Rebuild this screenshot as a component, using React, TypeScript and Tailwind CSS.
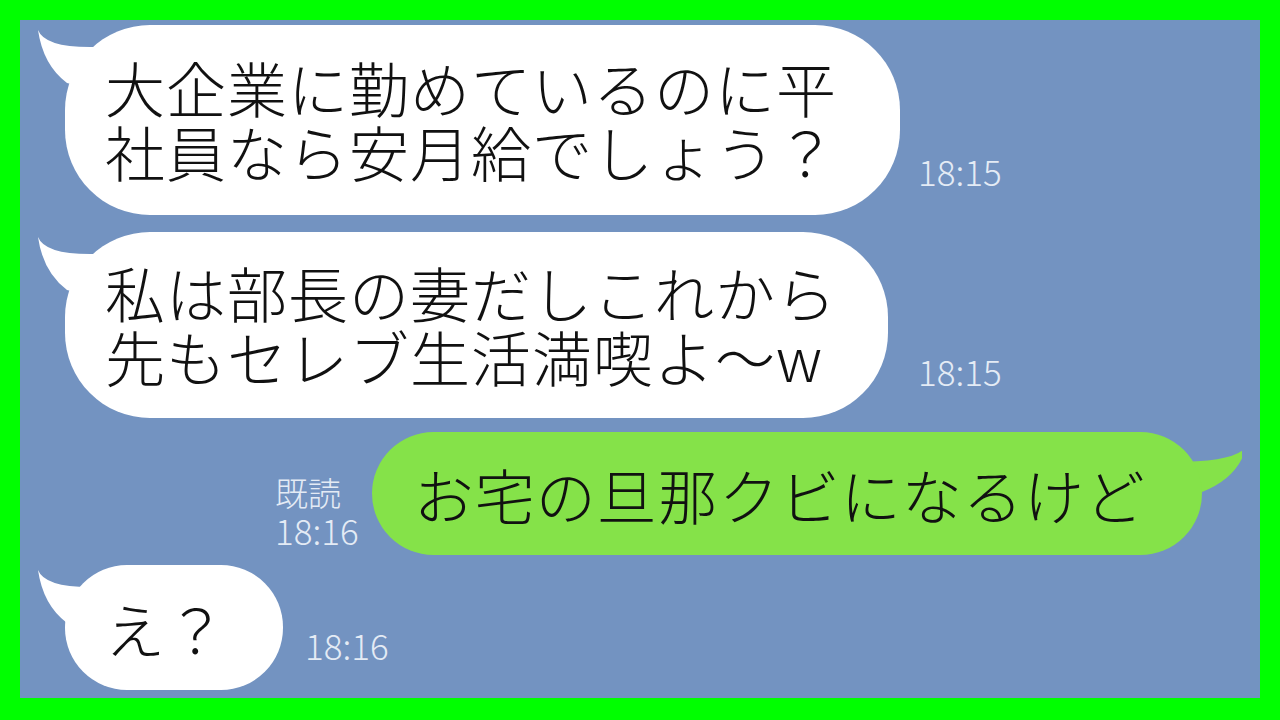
import React from "react";

const JP = { fontFamily: '"Noto Sans CJK JP", "Noto Sans", sans-serif' };

function LeftTail() {
  return (
    <svg
      className="absolute left-[-30px] top-0"
      width="70"
      height="70"
      viewBox="0 0 70 70"
    >
      <path d="M3 5 Q10 23 60 22 L60 65 L32 58 Q8 40 3 5 Z" fill="#ffffff" />
    </svg>
  );
}

function RightTail() {
  return (
    <svg
      className="absolute right-[-40px] top-0"
      width="70"
      height="70"
      viewBox="0 0 70 70"
    >
      <path d="M75 12 Q70 30 0 30 L0 65 L30 60 Q68 45 75 12 Z" fill="#85e249" />
    </svg>
  );
}

function Time({ children, cls }: { children: React.ReactNode; cls: string }) {
  return (
    <div className={`text-[35px] font-light leading-none text-[#e4ebf5] ${cls}`} style={JP}>
      {children}
    </div>
  );
}

export default function App() {
  return (
    <div className="w-[1280px] h-[720px] bg-[#00ff00] pt-[20px] pl-[20px] pr-[20px] pb-[22px]">
      <div className="w-full h-full bg-[#7393c1] flex flex-col font-light" style={JP}>
        {/* Row 1 */}
        <div className="flex items-end mt-[5px] ml-[45px]">
          <div className="relative">
            <LeftTail />
            <div className="relative bg-white rounded-[85px] h-[190px] w-[835px] pl-[40px] pt-[30px] text-[60px] leading-[64px] tracking-[1px] text-[#111]">
              <div>大企業に勤めているのに平</div>
              <div>社員なら安月給でしょう？</div>
            </div>
          </div>
          <Time cls="ml-[18px] mb-[27px]">18:15</Time>
        </div>

        {/* Row 2 */}
        <div className="flex items-end mt-[17px] ml-[45px]">
          <div className="relative">
            <LeftTail />
            <div className="relative bg-white rounded-[85px] h-[186px] w-[823px] pl-[40px] pt-[28px] text-[60px] leading-[64px] tracking-[1px] text-[#111]">
              <div>私は部長の妻だしこれから</div>
              <div>先もセレブ生活満喫よ～w</div>
            </div>
          </div>
          <Time cls="ml-[30px] mb-[30px]">18:15</Time>
        </div>

        {/* Row 3 */}
        <div className="flex items-end mt-[14px] ml-[255px]">
          <div className="flex flex-col mb-[6px] text-[#e4ebf5]">
            <div className="text-[33px] leading-[38px]">既読</div>
            <div className="text-[35px] leading-[38px]">18:16</div>
          </div>
          <div className="relative ml-[13px]">
            <RightTail />
            <div className="relative bg-[#85e249] rounded-[62px] h-[123px] w-[830px] pl-[42px] flex items-center text-[60px] leading-[64px] tracking-[1px] text-[#111]">
              お宅の旦那クビになるけど
            </div>
          </div>
        </div>

        {/* Row 4 */}
        <div className="flex items-end mt-[10px] ml-[45px]">
          <div className="relative">
            <LeftTail />
            <div className="relative bg-white rounded-[62px] h-[125px] w-[218px] pl-[40px] flex items-center text-[60px] leading-[64px] tracking-[1px] text-[#111]">
              え？
            </div>
          </div>
          <Time cls="ml-[22px] mb-[28px]">18:16</Time>
        </div>
      </div>
    </div>
  );
}
